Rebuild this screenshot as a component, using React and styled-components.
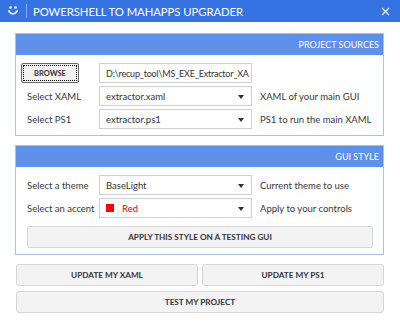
import React from "react";
import styled, { createGlobalStyle } from "styled-components";

const Global = createGlobalStyle`
  html, body { margin: 0; padding: 0; background: #ffffff; }
  body { font-family: Lato, "Noto Sans", sans-serif; width: 400px; height: 323px; overflow: hidden; }
  * { box-sizing: border-box; }
`;

const Window = styled.div`
  width: 400px;
  height: 323px;
  display: flex;
  flex-direction: column;
  background: #fff;
`;

const TitleBar = styled.div`
  height: 22px;
  background: #3572e2;
  display: flex;
  align-items: center;
  color: #fff;
  padding: 0 0 0 7px;
`;

const TitleIcon = styled.svg`
  width: 12px;
  height: 12px;
  flex: none;
`;

const TitleSep = styled.div`
  width: 1px;
  height: 14px;
  background: rgba(255,255,255,0.45);
  margin: 0 6px 0 7px;
`;

const TitleText = styled.div`
  font-size: 11.3px;
  letter-spacing: -0.05px;
  flex: 1;
  white-space: nowrap;
`;

const CloseBox = styled.div`
  width: 30px;
  height: 22px;
  display: flex;
  align-items: center;
  justify-content: center;
`;

const Body = styled.div`
  padding: 11px 16px 0 15px;
  display: flex;
  flex-direction: column;
`;

const Panel = styled.section`
  border: 1px solid #a9c1e3;
  margin-bottom: 9px;
`;

const PanelHeader = styled.div`
  height: 21px;
  background: #5d90ea;
  color: #fff;
  font-size: 9px;
  display: flex;
  align-items: center;
  justify-content: flex-end;
  padding-right: 4px;
`;

const PanelGrid = styled.div`
  display: grid;
  grid-template-columns: 78px 153px 1fr;
  row-gap: 3px;
  padding: 8px 0 6px 5px;
  align-items: center;
`;

const Label = styled.div`
  font-size: 9.5px;
  color: #383838;
  padding-left: 6px;
  white-space: nowrap;
`;

const Desc = styled.div`
  font-size: 9.5px;
  color: #383838;
  padding-left: 8px;
  white-space: nowrap;
`;

const Field = styled.div`
  height: 20px;
  border: 1px solid #cfcfcf;
  background: #fff;
  font-size: ${p => (p.$tight ? "9px" : "9.5px")};
  letter-spacing: ${p => (p.$tight ? "-0.2px" : "0")};
  color: ${p => p.$color || "#333"};
  display: flex;
  align-items: center;
  padding: ${p => (p.$tight ? "0 1px 0 6px" : "0 6px")};
  white-space: nowrap;
  overflow: hidden;
  position: relative;
`;

const Arrow = styled.span`
  position: absolute;
  right: 7px;
  top: 8px;
  width: 0;
  height: 0;
  border-left: 3px solid transparent;
  border-right: 3px solid transparent;
  border-top: 4px solid #333;
`;

const Swatch = styled.span`
  width: 8px;
  height: 8px;
  background: #ff0000;
  margin-right: 8px;
  flex: none;
`;

const Button = styled.button`
  height: 22px;
  border: 1px solid #d6d6d6;
  border-radius: 3px;
  background: #f3f3f3;
  font-family: Lato, "Noto Sans", sans-serif;
  font-weight: 700;
  font-size: ${p => p.$fs || 8.2}px;
  color: #333;
  padding: 0;
  display: flex;
  align-items: center;
  justify-content: center;
  width: 100%;
`;

const BrowseButton = styled(Button)`
  width: 58px;
  height: 20px;
  border: 1px solid #6a6a6a;
  border-radius: 2px;
  outline: 1px dotted #000;
  outline-offset: -3px;
  background: #f2f2f2;
  justify-self: start;
`;

const ApplyButton = styled(Button)`
  grid-column: 1 / -1;
  margin: 5px 10px 0 6px;
  width: auto;
`;

const ButtonRow = styled.div`
  display: grid;
  grid-template-columns: 1fr 1fr;
  gap: 4px;
  padding-left: 1px;
  margin-bottom: 5px;
`;

const WideRow = styled.div`
  padding-left: 1px;
`;

function Combo({ children, color, swatch }) {
  return (
    <Field $color={color}>
      {swatch && <Swatch />}
      {children}
      <Arrow />
    </Field>
  );
}

export default function App() {
  return (
    <Window>
      <Global />
      <TitleBar>
        <TitleIcon viewBox="0 0 12 12">
          <circle cx="3.5" cy="2.5" r="1.3" fill="#fff" />
          <circle cx="8.5" cy="2.5" r="1.3" fill="#fff" />
          <path d="M1.8 6 Q6 12 10.2 6" stroke="#fff" strokeWidth="1.7" fill="none" strokeLinecap="round" />
        </TitleIcon>
        <TitleSep />
        <TitleText>POWERSHELL TO MAHAPPS UPGRADER</TitleText>
        <CloseBox>
          <svg width="9" height="9" viewBox="0 0 9 9">
            <path d="M1 1 L8 8 M8 1 L1 8" stroke="#dfe8fa" strokeWidth="1.4" />
          </svg>
        </CloseBox>
      </TitleBar>
      <Body>
        <Panel>
          <PanelHeader>PROJECT SOURCES</PanelHeader>
          <PanelGrid>
            <BrowseButton $fs={7.5}>BROWSE</BrowseButton>
            <Field $tight>D:\recup_tool\MS_EXE_Extractor_XA</Field>
            <div />
            <Label>Select XAML</Label>
            <Combo>extractor.xaml</Combo>
            <Desc>XAML of your main GUI</Desc>
            <Label>Select PS1</Label>
            <Combo>extractor.ps1</Combo>
            <Desc>PS1 to run the main XAML</Desc>
          </PanelGrid>
        </Panel>
        <Panel>
          <PanelHeader>GUI STYLE</PanelHeader>
          <PanelGrid>
            <Label>Select a theme</Label>
            <Combo>BaseLight</Combo>
            <Desc>Current theme to use</Desc>
            <Label>Select an accent</Label>
            <Combo color="#e00000" swatch>Red</Combo>
            <Desc>Apply to your controls</Desc>
            <ApplyButton>APPLY THIS STYLE ON A TESTING GUI</ApplyButton>
          </PanelGrid>
        </Panel>
        <ButtonRow>
          <Button>UPDATE MY XAML</Button>
          <Button>UPDATE MY PS1</Button>
        </ButtonRow>
        <WideRow>
          <Button>TEST MY PROJECT</Button>
        </WideRow>
      </Body>
    </Window>
  );
}
